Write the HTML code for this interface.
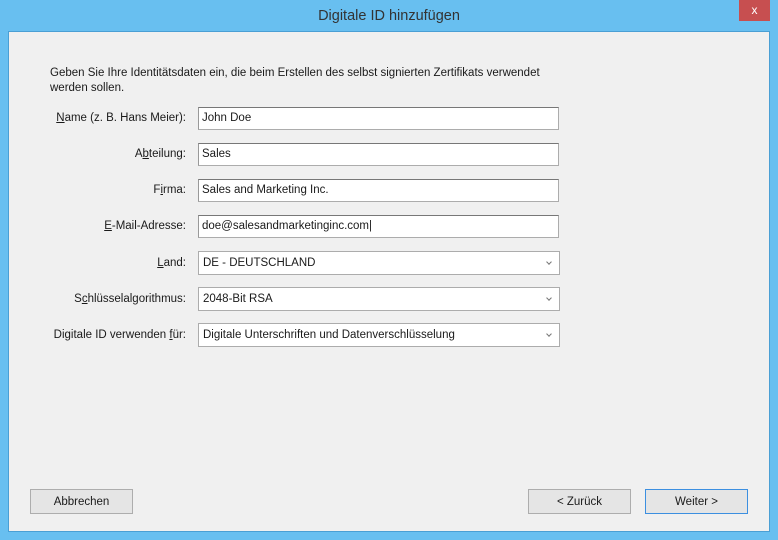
<!DOCTYPE html>
<html><head><meta charset="utf-8"><style>
*{margin:0;padding:0;box-sizing:border-box}
body{width:778px;height:540px;background:#68bff0;font-family:"Liberation Sans",sans-serif;font-size:11.5px;color:#1a1a1a;position:relative;overflow:hidden}
.title{position:absolute;left:0;top:0;width:778px;height:31px;text-align:center;line-height:32px;font-size:14.5px;color:#333}
.close{position:absolute;left:739px;top:0;width:31px;height:21px;background:#c74f50;color:#fff;text-align:center;line-height:21px;font-size:12px}
.content{position:absolute;left:8px;top:31px;width:762px;height:501px;background:#f0f0f0;border:1px solid #4a9fd4}
.t{position:absolute;white-space:nowrap}
.lbl{position:absolute;right:592px;text-align:right;white-space:nowrap}
.in{position:absolute;left:198px;width:361px;height:23px;background:#fff;border:1px solid #acacac;border-top-color:#777;border-left-color:#999;padding:4px 0 0 3px}
.cb{position:absolute;left:198px;width:362px;height:24px;background:#fff;border:1px solid #acacac;padding:5px 0 0 4px}
.cb:after{content:"";position:absolute;right:8px;top:8px;width:3px;height:3px;border-right:1.5px solid #777;border-bottom:1.5px solid #777;transform:rotate(45deg)}
.btn{position:absolute;top:489px;width:103px;height:25px;background:#e5e5e5;border:1px solid #adadad;text-align:center;line-height:25px}
</style></head><body>
<div class="title">Digitale ID hinzufügen</div>
<div class="close">x</div>
<div class="content"></div>
<div class="t" style="left:50px;top:67px">Geben Sie Ihre Identitätsdaten ein, die beim Erstellen des selbst signierten Zertifikats verwendet</div>
<div class="t" style="left:50px;top:82px">werden sollen.</div>
<div class="lbl" style="top:112px"><u>N</u>ame (z. B. Hans Meier):</div>
<div class="in" style="top:107px">John Doe</div>
<div class="lbl" style="top:148px">A<u>b</u>teilung:</div>
<div class="in" style="top:143px">Sales</div>
<div class="lbl" style="top:184px">F<u>i</u>rma:</div>
<div class="in" style="top:179px">Sales and Marketing Inc.</div>
<div class="lbl" style="top:220px"><u>E</u>-Mail-Adresse:</div>
<div class="in" style="top:215px">doe@salesandmarketinginc.com|</div>
<div class="lbl" style="top:257px"><u>L</u>and:</div>
<div class="cb" style="top:251px">DE - DEUTSCHLAND</div>
<div class="lbl" style="top:293px">S<u>c</u>hlüsselalgorithmus:</div>
<div class="cb" style="top:287px">2048-Bit RSA</div>
<div class="lbl" style="top:329px">Digitale ID verwenden <u>f</u>ür:</div>
<div class="cb" style="top:323px">Digitale Unterschriften und Datenverschlüsselung</div>
<div class="btn" style="left:30px">Abbrechen</div>
<div class="btn" style="left:528px">&lt; Zurück</div>
<div class="btn" style="left:645px;border-color:#3c8fe0">Weiter &gt;</div>
</body></html>
